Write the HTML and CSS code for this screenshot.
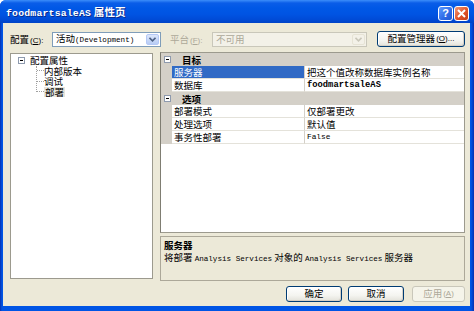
FILE: index.html
```html
<!DOCTYPE html>
<html>
<head>
<meta charset="utf-8">
<link rel="stylesheet" href="styles.css">
</head>
<body>
<div class="window">
  <div class="titlebar">
    <span class="title"><span class="mono">foodmartsaleAS</span> 属性页</span>
    <div class="tbtns">
      <span class="tbtn help">?</span>
      <span class="tbtn close"><svg width="9" height="9" viewBox="0 0 9 9"><path d="M1 1L8 8M8 1L1 8" stroke="#fff" stroke-width="2"/></svg></span>
    </div>
  </div>
  <div class="body">
    <div class="toprow">
      <span class="lbl">配置<span class="lat">(<u>C</u>):</span></span>
      <div class="select">
        <span class="seltext">活动<span class="mono">(Development)</span></span>
        <span class="arrow"><svg width="7" height="5" viewBox="0 0 7 5"><path d="M0.5 0.8L3.5 3.8L6.5 0.8" stroke="#4D6185" stroke-width="1.6" fill="none"/></svg></span>
      </div>
      <span class="lbl dis">平台<span class="lat">(<u>F</u>):</span></span>
      <div class="select disabled">
        <span class="seltext">不可用</span>
        <span class="arrow"><svg width="7" height="5" viewBox="0 0 7 5"><path d="M0.5 0.8L3.5 3.8L6.5 0.8" stroke="#C9C7BA" stroke-width="1.6" fill="none"/></svg></span>
      </div>
      <button class="btn cfg">配置管理器<span class="lat">(<u>O</u>)...</span></button>
    </div>
    <div class="main">
      <div class="tree">
        <div class="node root"><span class="pm"></span><span>配置属性</span></div>
        <div class="children">
          <div class="node child"><span class="hl"></span><span>内部版本</span></div>
          <div class="node child"><span class="hl"></span><span>调试</span></div>
          <div class="node child last"><span class="hl"></span><span class="sel">部署</span></div>
        </div>
      </div>
      <div class="right">
        <div class="grid">
          <div class="cat"><span class="gut"><span class="pm"></span></span><span class="ctext">目标</span></div>
          <div class="prow"><span class="gut"></span><span class="name selname">服务器</span><span class="val">把这个值改称数据库实例名称</span></div>
          <div class="prow"><span class="gut"></span><span class="name">数据库</span><span class="val"><span class="mono b big">foodmartsaleAS</span></span></div>
          <div class="cat"><span class="gut"><span class="pm"></span></span><span class="ctext">选项</span></div>
          <div class="prow"><span class="gut"></span><span class="name">部署模式</span><span class="val">仅部署更改</span></div>
          <div class="prow"><span class="gut"></span><span class="name">处理选项</span><span class="val">默认值</span></div>
          <div class="prow"><span class="gut"></span><span class="name">事务性部署</span><span class="val"><span class="mono mid">False</span></span></div>
        </div>
        <div class="desc">
          <div class="dtitle">服务器</div>
          <div class="dtext">将部署 <span class="mono">Analysis Services</span> 对象的 <span class="mono">Analysis Services</span> 服务器</div>
        </div>
      </div>
    </div>
    <div class="btnrow">
      <button class="btn ok">确定</button>
      <button class="btn cancel">取消</button>
      <button class="btn apply" disabled>应用<span class="lat">(<u>A</u>)</span></button>
    </div>
  </div>
</div>
</body>
</html>
```
FILE: styles.css
```css
* { box-sizing: border-box; }
html, body { margin: 0; padding: 0; }
body {
  width: 474px; height: 311px; overflow: hidden;
  font-family: "Noto Sans CJK SC", "Liberation Sans", sans-serif;
  font-size: 9.5px;
  color: #000;
  background: #fff;
}
.mono { font-family: "Liberation Mono", "Noto Sans CJK SC", monospace; font-size: 7.6px; }
.mono.big { font-size: 8.8px; }
.mono.mid { font-size: 7.8px; }
.lat { font-family: "Liberation Sans", sans-serif; font-size: 8px; margin-left: 1px; }
.b { font-weight: bold; }
.window {
  width: 474px; height: 311px;
  background: linear-gradient(90deg, #0831B0 0, #0055E5 2px, #0055E5 471px, #0831B0 474px);
  display: flex; flex-direction: column;
  border-radius: 6px 6px 0 0;
  overflow: hidden;
}
.titlebar {
  height: 23px; flex: none;
  display: flex; align-items: center; justify-content: space-between;
  padding: 0 5px 0 6px;
  background: linear-gradient(180deg, #3C8EFA 0, #0A5DE8 3px, #0058E6 8px, #0054E3 14px, #004CD8 19px, #0043C6 23px);
}
.title {
  color: #fff; font-weight: bold; font-size: 10.5px;
  text-shadow: 1px 1px 0 #0A2A8A;
  letter-spacing: 0.2px;
}
.title .mono { font-size: 9.8px; font-weight: bold; }
.tbtns { display: flex; gap: 1px; padding-top: 3px; }
.tbtn {
  width: 15px; height: 15px; border: 1px solid #fff; border-radius: 3px;
  display: flex; align-items: center; justify-content: center;
  color: #fff; font-family: "Liberation Sans", sans-serif; font-weight: bold; font-size: 11px;
}
.help { background: linear-gradient(135deg, #5D9BFF, #2D69E6 60%, #2258D0); }
.close { background: linear-gradient(135deg, #F09A7A, #E0542A 55%, #C23D16); }
.body {
  flex: 1;
  margin: 0 4px 5px 3px;
  background: #ECE9D8;
  display: flex; flex-direction: column;
  padding: 8px 5px 0 7px;
}
.toprow {
  height: 16px; display: flex; align-items: center;
}
.lbl { width: 42px; flex: none; white-space: nowrap; }
.lbl.dis { color: #ACA899; width: 42px; margin-left: 9px; }
.select {
  height: 15px; display: flex; align-items: center; justify-content: space-between;
  background: #fff; border: 1px solid #7F9DB9;
  padding: 0 1px 0 3px;
  width: 109px;
}
.select.disabled { width: 155px; background: #F3F1E8; border-color: #C9C7BA; color: #ACA899; }
.seltext { white-space: nowrap; line-height: 12px; }
.arrow {
  width: 13px; height: 11px; border-radius: 2px;
  display: flex; align-items: center; justify-content: center;
  background: linear-gradient(180deg, #DCE6FB, #B8CCF4);
  border: 1px solid #B4C8F6;
}
.disabled .arrow { background: #F3F1E8; border-color: #E6E3D5; }
.btn {
  font-family: "Noto Sans CJK SC", "Liberation Sans", sans-serif; font-size: 9.5px;
  height: 16px; padding: 0;
  border: 1px solid #003C74; border-radius: 3px;
  background: linear-gradient(180deg, #FFFFFF 0, #F4F4F0 60%, #E3E2DA 100%);
  box-shadow: inset -1px -1px 0 #D6D0C5, inset 1px 1px 0 #fff;
  display: flex; align-items: center; justify-content: center;
  color: #000; line-height: 1;
}
.cfg { width: 88px; margin-left: 10px; }
.main {
  display: flex; gap: 7px;
  margin-top: 5px;
  height: 229px;
}
.tree {
  width: 143px; height: 226px; margin-top: 1px;
  background: #fff; border: 1px solid #9C9A8E;
  padding: 1px 0 0 7px;
}
.node { height: 10.5px; line-height: 10px; display: flex; align-items: center; white-space: nowrap; }
.root .pm { margin-right: 5px; }
.pm {
  width: 7px; height: 7px; border: 1px solid #8E9AAE; background: #fff;
  position: relative; flex: none;
}
.pm::after {
  content: ""; position: absolute; left: 1px; top: 2px; width: 3px; height: 1px; background: #000;
}
.children { margin-left: 18px; border-left: 1px dotted #A0A0A0; height: 26px; }
.child .hl { width: 7px; border-top: 1px dotted #A0A0A0; }
.sel { background: #E6E4DC; padding: 0 1px; }
.right { width: 305px; display: flex; flex-direction: column; gap: 3px; }
.grid {
  height: 181px; background: #fff;
  border: 1px solid #9C9A8E;
  border-left-color: #7F7D72;
}
.cat, .prow { height: 13px; line-height: 12px; display: flex; align-items: stretch; }
.cat { background: #D4D0C8; }
.gut { width: 11px; flex: none; background: #D4D0C8; display: flex; align-items: center; justify-content: center; }
.cat .gut { padding-left: 1px; }
.ctext { font-weight: bold; padding-left: 10px; display: flex; align-items: center; }
.prow .name, .prow .val {
  display: flex; align-items: center;
  border-bottom: 1px solid #E4E2DA;
  white-space: nowrap; overflow: hidden;
}
.prow .name { width: 133px; padding-left: 2px; border-right: 1px solid #D4D0C8; }
.prow .val { flex: 1; padding-left: 2px; }
.selname { background: #316AC5; color: #fff; }
.desc {
  height: 45px; border: 1px solid #ACA899;
  padding: 2px 3px;
}
.dtitle { font-weight: bold; height: 12px; line-height: 12px; }
.dtext { height: 12px; line-height: 12px; white-space: nowrap; }
.btnrow {
  display: flex; justify-content: flex-end; gap: 6px;
  margin-top: 5px;
}
.ok, .cancel { width: 56px; }
.cancel { margin-right: 2px; }
.apply { width: 53px; border-color: #C9C7BA; color: #ACA899; background: #F5F4EA; box-shadow: none; }
```
